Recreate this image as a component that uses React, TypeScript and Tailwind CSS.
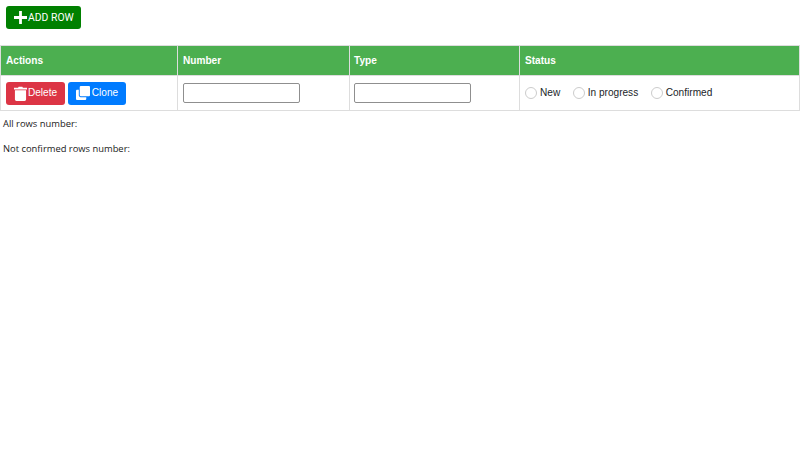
import { useState } from 'react';

const STATUSES = ['New', 'In progress', 'Confirmed'];

function PlusIcon() {
  return (
    <svg width="13" height="13" viewBox="0 0 14 14" fill="currentColor">
      <path d="M5.5 0h3v5.5H14v3H8.5V14h-3V8.5H0v-3h5.5z" />
    </svg>
  );
}

function TrashIcon() {
  return (
    <svg width="13" height="15" viewBox="0 0 14 16" fill="currentColor">
      <path d="M0 1.8h4.4L5 .6h4l.6 1.2H14v1.9H0z" />
      <path d="M1 4.6h12v9.8c0 .9-.7 1.6-1.6 1.6H2.6c-.9 0-1.6-.7-1.6-1.6z" />
    </svg>
  );
}

function CloneIcon() {
  return (
    <svg width="14" height="14" viewBox="0 0 15 15" fill="currentColor">
      <rect x="4" y="0" width="11" height="11" rx="1.2" />
      <path d="M3 4v6c0 1.1.9 2 2 2h6v1.6c0 .8-.6 1.4-1.4 1.4H1.4C.6 15 0 14.4 0 13.6V5.4C0 4.6.6 4 1.4 4z" />
    </svg>
  );
}

export default function App() {
  const [status, setStatus] = useState('');

  return (
    <div className="min-h-[450px] bg-white font-['Liberation_Sans',sans-serif] text-[#212529]">
      <div className="px-1.5 pt-1.5 pb-4">
        <button className="flex h-[23px] w-[75px] items-center gap-[1px] rounded-[3px] bg-[#008000] pl-2 font-['Roboto',sans-serif] text-[10.4px] text-white">
          <PlusIcon />
          ADD ROW
        </button>
      </div>

      <table className="w-[800px] table-fixed border-collapse text-[10.1px]">
        <thead>
          <tr className="h-[30px] bg-[#4caf50] text-left text-white">
            <th className="w-[177px] border border-[#ddd] pl-[5px] font-bold">Actions</th>
            <th className="w-[172px] border border-[#ddd] pl-[5px] font-bold">Number</th>
            <th className="w-[170px] border border-[#ddd] pl-[4px] font-bold">Type</th>
            <th className="border border-[#ddd] pl-[5px] font-bold">Status</th>
          </tr>
        </thead>
        <tbody>
          <tr className="h-[35px]">
            <td className="border border-[#ddd] pl-[5px]">
              <div className="flex gap-[3px]">
                <button className="flex h-[23px] w-[59px] items-center justify-center gap-[1px] rounded-[3px] bg-[#dc3545] text-white">
                  <TrashIcon />
                  Delete
                </button>
                <button className="flex h-[23px] w-[58px] items-center justify-center gap-[2px] rounded-[3px] bg-[#007bff] text-white">
                  <CloneIcon />
                  Clone
                </button>
              </div>
            </td>
            <td className="border border-[#ddd] pl-[5px]">
              <input className="block h-[20px] w-[117px] rounded-[2px] border border-[#8f8f8f] bg-white" />
            </td>
            <td className="border border-[#ddd] pl-[4px]">
              <input className="block h-[20px] w-[117px] rounded-[2px] border border-[#8f8f8f] bg-white" />
            </td>
            <td className="border border-[#ddd] pl-[5px]">
              <div className="flex items-center">
                {STATUSES.map((s) => (
                  <label key={s} className="mr-[12.5px] flex items-center gap-[3px]">
                    <input
                      type="radio"
                      name="status"
                      checked={status === s}
                      onChange={() => setStatus(s)}
                      className="h-3 w-3 appearance-none rounded-full border border-[#ccc] bg-white"
                    />
                    {s}
                  </label>
                ))}
              </div>
            </td>
          </tr>
        </tbody>
      </table>

      <p className="mt-[6px] pl-[3px] font-['Open_Sans',sans-serif] text-[9.4px] leading-[13px] text-[#222]">All rows number:</p>
      <p className="mt-[12px] pl-[3px] font-['Open_Sans',sans-serif] text-[9.4px] leading-[13px] text-[#222]">Not confirmed rows number:</p>
    </div>
  );
}
